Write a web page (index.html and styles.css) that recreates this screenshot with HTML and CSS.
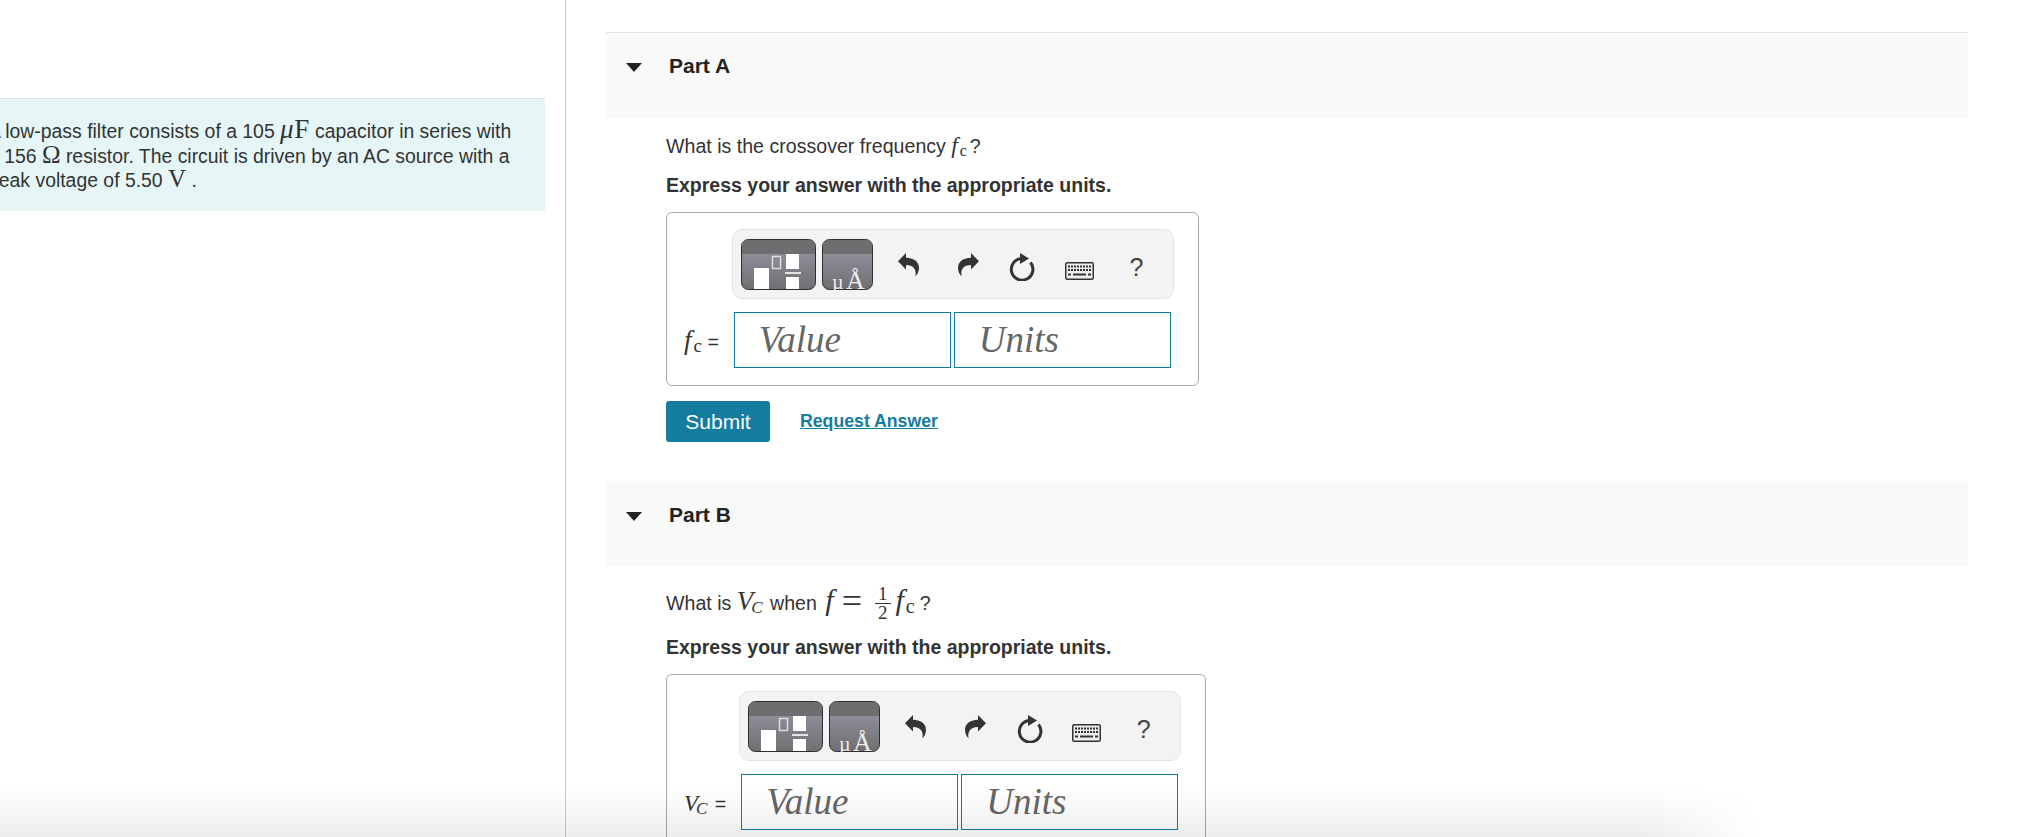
FILE: index.html
```html
<!DOCTYPE html>
<html lang="en">
<head>
    <meta charset="UTF-8">
    <meta name="viewport" content="width=device-width, initial-scale=1.0">
    <title>Low-pass filter</title>
    <link rel="stylesheet" href="styles.css">
</head>
<body>
    <svg class="icon-defs" width="0" height="0">
        <defs>
            <linearGradient id="btnFill" x1="0" y1="0" x2="0" y2="1">
                <stop offset="0" stop-color="#9a98a4"/>
                <stop offset="1" stop-color="#6f6f72"/>
            </linearGradient>
            <symbol id="templates" viewBox="0 0 75 51">
                <rect x="0.5" y="0.5" width="74" height="50" rx="7" fill="url(#btnFill)" stroke="#2e2e30"/>
                <path d="M1 15V7a6 6 0 0 1 6-6h61a6 6 0 0 1 6 6v8z" fill="#6e6e70"/>
                <rect x="13" y="29" width="15" height="21" fill="#fff"/>
                <rect x="31.5" y="17.500" width="8" height="12" fill="none" stroke="#ddd" stroke-width="1.500"/>
                <rect x="45" y="15" width="13" height="15" fill="#fff"/>
                <rect x="44" y="33" width="16" height="2" fill="#e4e4e4"/>
                <rect x="45" y="38" width="13" height="12" fill="#fff"/>
            </symbol>
            <symbol id="units" viewBox="0 0 51 51">
                <rect x="0.5" y="0.5" width="50" height="50" rx="7" fill="url(#btnFill)" stroke="#2e2e30"/>
                <path d="M1 15V7a6 6 0 0 1 6-6h37a6 6 0 0 1 6 6v8z" fill="#6e6e70"/>
                <text x="10" y="50" class="btn-mu">µ</text>
                <text x="24" y="50" class="btn-aa">Å</text>
            </symbol>
            <symbol id="undo" viewBox="0 0 21 24">
                <path d="M0 8.300L8 0V4.700C15 4.700 21 8 21 15C21 18 19.500 21.500 17.300 23.500C18.500 19 17.500 12 8 12V16.500Z" fill="#333"/>
            </symbol>
            <symbol id="redo" viewBox="0 0 21 24">
                <path d="M21 8.300L13 0V4.700C6 4.700 0 8 0 15C0 18 1.500 21.500 3.700 23.500C2.500 19 3.500 12 13 12V16.500Z" fill="#333"/>
            </symbol>
            <symbol id="reset" viewBox="0 0 26 28">
                <path d="M13 5.500A10.800 10.800 0 1 0 21.500 9.500" fill="none" stroke="#333" stroke-width="3"/>
                <path d="M11 0L20 5.500L11 11Z" fill="#333"/>
            </symbol>
            <symbol id="keyboard" viewBox="0 0 29 18">
                <rect x="0.750" y="0.750" width="27.500" height="16.500" rx="1.500" fill="#eee" stroke="#333" stroke-width="1.500"/>
                <path d="M3 4.500H26M3 8H26" stroke="#333" stroke-width="1.800" stroke-dasharray="2 1"/>
                <path d="M3 12.500H6M8 12.500H21M23 12.500H26" stroke="#333" stroke-width="1.800"/>
            </symbol>
        </defs>
    </svg>

    <div class="page">
        <aside class="intro">
            <div class="intro-box">
                A low-pass filter consists of a 105 <span class="math unit-wide"><i>μ</i>F</span> capacitor in series with<br>
                a 156 <span class="math">Ω</span> resistor. The circuit is driven by an AC source with a<br>
                peak voltage of 5.50 <span class="math">V</span> .
            </div>
        </aside>

        <main class="parts">
            <section class="part part-first">
                <div class="part-head">
                    <span class="caret"></span>
                    <h2>Part A</h2>
                </div>
                <div class="part-body">
                    <p class="question">What is the crossover frequency <span class="math"><i class="fn">f</i><span class="sub">c</span></span><span class="qmark">?</span></p>
                    <p class="instruction">Express your answer with the appropriate units.</p>
                    <div class="answer-box">
                        <div class="toolbar">
                            <svg class="tool-btn wide"><use href="#templates"/></svg>
                            <svg class="tool-btn narrow"><use href="#units"/></svg>
                            <span class="tool-cell"><svg class="ic-arrow"><use href="#undo"/></svg></span>
                            <span class="tool-cell"><svg class="ic-arrow ic-redo"><use href="#redo"/></svg></span>
                            <span class="tool-cell"><svg class="ic-reset"><use href="#reset"/></svg></span>
                            <span class="tool-cell"><svg class="ic-keys"><use href="#keyboard"/></svg></span>
                            <span class="tool-cell help">?</span>
                        </div>
                        <label class="answer-label"><span class="math"><i class="fn">f</i><span class="sub">c</span></span> =</label>
                        <div class="inputs">
                            <input class="answer-input" placeholder="Value">
                            <input class="answer-input" placeholder="Units">
                        </div>
                    </div>
                    <div class="actions">
                        <button class="submit">Submit</button>
                        <a class="request" href="#">Request Answer</a>
                    </div>
                </div>
            </section>

            <section class="part">
                <div class="part-head">
                    <span class="caret"></span>
                    <h2>Part B</h2>
                </div>
                <div class="part-body">
                    <p class="question question-tall">What is <span class="math"><i class="big">V</i><i class="sub sub-c">C</i></span> when
                        <span class="math math-eq"><i class="big big-f fn">f</i><span class="eq">=</span><span class="frac"><span>1</span><span class="frac-low">2</span></span><i class="big big-f fn">f</i><span class="sub">c</span></span><span class="qmark qmark-wide">?</span></p>
                    <p class="instruction">Express your answer with the appropriate units.</p>
                    <div class="answer-box">
                        <div class="toolbar">
                            <svg class="tool-btn wide"><use href="#templates"/></svg>
                            <svg class="tool-btn narrow"><use href="#units"/></svg>
                            <span class="tool-cell"><svg class="ic-arrow"><use href="#undo"/></svg></span>
                            <span class="tool-cell"><svg class="ic-arrow ic-redo"><use href="#redo"/></svg></span>
                            <span class="tool-cell"><svg class="ic-reset"><use href="#reset"/></svg></span>
                            <span class="tool-cell"><svg class="ic-keys"><use href="#keyboard"/></svg></span>
                            <span class="tool-cell help">?</span>
                        </div>
                        <label class="answer-label"><span class="math"><i class="label-v">V</i><i class="sub sub-c">C</i></span> =</label>
                        <div class="inputs">
                            <input class="answer-input" placeholder="Value">
                            <input class="answer-input" placeholder="Units">
                        </div>
                    </div>
                </div>
            </section>
        </main>
    </div>

    <div class="bottom-fade"></div>
</body>
</html>
```

FILE: styles.css
```css
html, body {
    margin: 0;
    padding: 0;
    height: 837px;
    overflow: hidden;
    background-color: white;
}
body {
    font-family: "Liberation Sans", Arial, sans-serif;
    font-size: 19.600px;
    color: #333;
    position: relative;
}

.icon-defs {
    position: absolute;
}

.page {
    display: flex;
    height: 837px;
}

/* Left column, the page is scrolled so the text is cut at the edge */
.intro {
    width: 566px;
    flex-shrink: 0;
    box-sizing: border-box;
    padding-top: 98px;
    padding-right: 20px;
    border-right: 1px solid #c8ccd4;
}
.intro-box {
    margin-left: -30px;
    padding: 20px 0 18px 18px;
    background-color: #e6f6f7;
    border-top: 1px solid #d8e2e6;
    line-height: 24.500px;
    white-space: nowrap;
    font-size: 19.400px;
}
.intro-box .math {
    font-size: 25px;
    line-height: 20px;
}
.intro-box .unit-wide {
    font-size: 27px;
    letter-spacing: 0.500px;
}

.math {
    font-family: "Liberation Serif", "Times New Roman", serif;
    font-size: 23px;
}
.fn {
    padding-right: 2px;
}
.sub {
    font-size: 16px;
    vertical-align: -3px;
    line-height: 0;
}
.sub-c {
    font-size: 17px;
    margin-left: -2px;
    margin-right: 2px;
}
.qmark {
    margin-left: 3px;
}
.qmark-wide {
    margin-left: 5px;
}

.parts {
    flex-grow: 1;
    padding-left: 40px;
    padding-right: 55px;
    padding-top: 32px;
}

.part-head {
    display: flex;
    align-items: flex-start;
    height: 85px;
    box-sizing: border-box;
    padding-top: 22px;
    background-color: #f9f9f9;
}
.part-first .part-head {
    height: 86px;
    border-top: 1px solid #e0e0e0;
    padding-top: 21px;
}
.part-first .question {
    margin-top: 16px;
}
.part-head h2 {
    margin: 0;
    font-size: 21px;
    line-height: 24px;
    color: #222;
}
.caret {
    width: 0;
    height: 0;
    margin: 9px 27px 0 20px;
    border-left: 8px solid transparent;
    border-right: 8px solid transparent;
    border-top: 9px solid #222;
}
.part-first {
    margin-bottom: 39px;
}

.part-body {
    padding-left: 60px;
}
.question {
    margin: 17px 0 15px;
    line-height: 24px;
    height: 24px;
}
.question-tall {
    margin: 17px 0 18px;
    height: 34px;
    line-height: 34px;
}
.instruction {
    margin: 0 0 15px;
    line-height: 24px;
    font-weight: bold;
    font-size: 19.500px;
}

.math-eq {
    font-size: 28px;
    margin-left: 3px;
}
.big {
    font-size: 27px;
}
.big-f {
    font-size: 30px;
}
.eq {
    font-size: 36px;
    line-height: 0;
    vertical-align: -3px;
    margin: 0 13px 0 6px;
}
.frac {
    display: inline-flex;
    flex-direction: column;
    vertical-align: middle;
    text-align: center;
    font-size: 19px;
    line-height: 18px;
    margin-right: 5px;
    padding-bottom: 1px;
}
.frac > span {
    padding: 0 3px;
}
.frac-low {
    border-top: 1px solid #333;
}
.math-eq .sub {
    font-size: 20px;
}

.answer-box {
    display: inline-grid;
    grid-template-columns: auto auto;
    column-gap: 15px;
    row-gap: 13px;
    align-items: center;
    padding: 16px 26px 17px 17px;
    border: 1px solid #aaa;
    border-radius: 6px;
    vertical-align: top;
}

.toolbar {
    grid-column: 2;
    display: flex;
    align-items: center;
    height: 70px;
    box-sizing: border-box;
    margin: 0 -2px;
    padding: 0 8px;
    background-color: #f3f3f3;
    border: 1px solid #e4e4e4;
    border-radius: 10px;
}
.tool-btn {
    height: 51px;
    flex-shrink: 0;
}
.tool-btn.wide {
    width: 75px;
    margin-right: 6px;
}
.tool-btn.narrow {
    width: 51px;
    margin-right: 7px;
}
.btn-mu {
    font-family: "Liberation Serif", serif;
    font-size: 20px;
    fill: #eee;
}
.btn-aa {
    font-family: "Liberation Serif", serif;
    font-size: 26px;
    fill: #eee;
}
.tool-cell {
    width: 57px;
    display: flex;
    justify-content: center;
}
.ic-arrow {
    width: 21px;
    height: 24px;
    margin-top: 2px;
}
.ic-redo {
    margin-left: 6px;
}
.ic-reset {
    width: 26px;
    height: 28px;
    margin-top: 5px;
}
.ic-keys {
    width: 29px;
    height: 18px;
    margin-top: 13px;
}
.help {
    font-size: 25px;
    line-height: 28px;
    padding-top: 5px;
    color: #444;
}

.answer-label {
    grid-column: 1;
    grid-row: 2;
    white-space: nowrap;
    font-size: 19.600px;
}
.answer-label .math {
    font-size: 27px;
}
.answer-label .sub {
    font-size: 19px;
}
.answer-label .sub-c {
    font-size: 17px;
}
.label-v {
    font-size: 23px;
}
.inputs {
    grid-column: 2;
    grid-row: 2;
    display: flex;
    gap: 3px;
}
.answer-input {
    width: 217px;
    height: 56px;
    box-sizing: border-box;
    padding: 0 0 2px 24px;
    border: 1px solid #147c9f;
    border-radius: 0;
    outline: none;
    background: transparent;
    font-family: "Liberation Serif", "Times New Roman", serif;
    font-style: italic;
    font-size: 37px;
}
.answer-input::placeholder {
    color: #666;
    opacity: 1;
}

.actions {
    display: flex;
    align-items: center;
    margin-top: 15px;
}
.submit {
    width: 104px;
    height: 41px;
    border: none;
    border-radius: 3px;
    background-color: #147c9f;
    color: white;
    font-family: inherit;
    font-size: 21px;
    padding: 0;
    cursor: pointer;
}
.request {
    margin-left: 30px;
    color: #147c9f;
    font-weight: bold;
    font-size: 17.700px;
}

/* Shadow from the bar below the visible part of the page */
.bottom-fade {
    position: absolute;
    left: 0;
    bottom: 0;
    width: 1760px;
    height: 50px;
    pointer-events: none;
    background: linear-gradient(to bottom, rgba(0,0,0,0), rgba(0,0,0,0.07));
    -webkit-mask-image: linear-gradient(to right, black 1640px, transparent 1760px);
    mask-image: linear-gradient(to right, black 1640px, transparent 1760px);
}
```
